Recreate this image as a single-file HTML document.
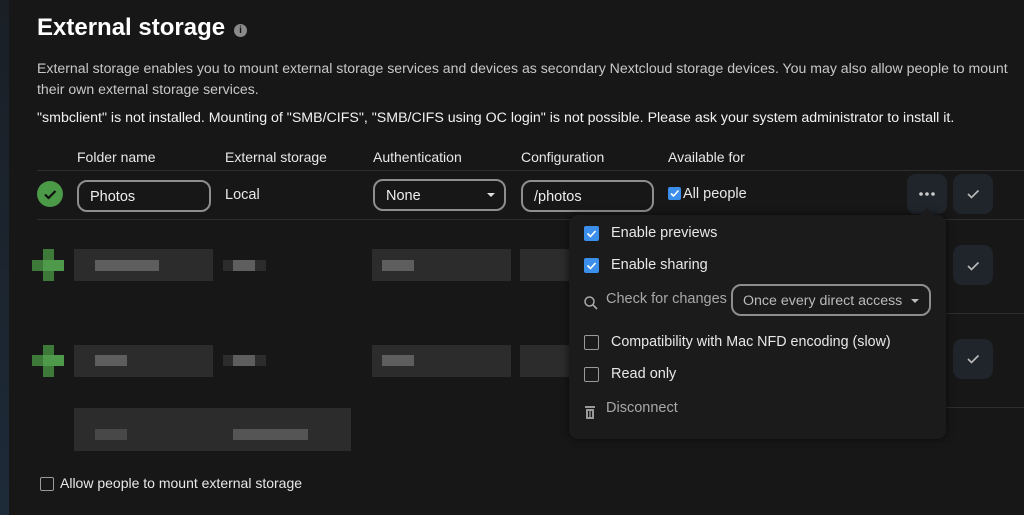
<!DOCTYPE html>
<html><head><meta charset="utf-8"><style>
*{box-sizing:border-box;margin:0;padding:0}
body{width:1024px;height:515px;overflow:hidden;background:#171717;font-family:"Liberation Sans",sans-serif;color:#e8e8e8;position:relative}
.a{position:absolute;white-space:nowrap}
.strip{left:0;top:0;width:9px;height:515px;background:linear-gradient(#1a1f26,#1d2a38)}
.inp{position:absolute;border:2px solid #8e8e8e;border-radius:10px;height:32px;font-size:14.5px;padding:7px 11px;color:#eee}
.line{position:absolute;height:1px;background:#2e2e2e}
.btn{position:absolute;width:40px;height:40px;border-radius:9px;background:#1f252b}
.blk{position:absolute;background:#2c2c2c}
.blk2{position:absolute;background:#5e5e5e}
.cb{position:absolute;width:15px;height:15px;border-radius:2px}
.on{background:#3b8eea}
.off{border:1.5px solid #9a9a9a}
.pop{position:absolute;left:569px;top:215px;width:377px;height:224px;background:#1b1b1b;border-radius:9px;box-shadow:0 0 8px rgba(0,0,0,.6)}
</style></head><body>
<div class="a strip"></div>
<div class="a" style="left:37px;top:14px;font-size:24px;font-weight:bold;color:#fff">External storage</div>
<div class="a" style="left:234px;top:24px;width:13px;height:13px;border-radius:50%;background:#8a8a8a;color:#171717;font-size:10px;font-weight:bold;text-align:center;line-height:13px">i</div>
<div class="a" style="left:37px;top:58px;font-size:14.1px;color:#c8c8c8;line-height:20.5px">External storage enables you to mount external storage services and devices as secondary Nextcloud storage devices. You may also allow people to mount<br>their own external storage services.</div>
<div class="a" style="left:37px;top:110px;font-size:14.2px;color:#f2f2f2">"smbclient" is not installed. Mounting of "SMB/CIFS", "SMB/CIFS using OC login" is not possible. Please ask your system administrator to install it.</div>
<div class="a" style="left:77px;top:149px;font-size:14px">Folder name</div>
<div class="a" style="left:225px;top:149px;font-size:14px">External storage</div>
<div class="a" style="left:373px;top:149px;font-size:14px">Authentication</div>
<div class="a" style="left:521px;top:149px;font-size:14px">Configuration</div>
<div class="a" style="left:668px;top:149px;font-size:14px">Available for</div>
<div class="line" style="left:37px;top:170px;width:987px"></div>
<div class="a" style="left:37px;top:181px;width:26px;height:26px;border-radius:50%;background:#4a9a48"></div>
<svg class="a" style="left:37px;top:181px" width="26" height="26"><path d="M8 13.5l3.5 3.5 7-7" stroke="#111" stroke-width="2.2" fill="none"/></svg>
<div class="inp" style="left:77px;top:180px;width:134px">Photos</div>
<div class="a" style="left:225px;top:187px;font-size:14.5px">Local</div>
<div class="inp" style="left:373px;top:179px;width:133px">None</div>
<div class="a" style="left:487px;top:193px;border-left:4px solid transparent;border-right:4px solid transparent;border-top:4px solid #ddd"></div>
<div class="inp" style="left:521px;top:180px;width:133px">/photos</div>
<div class="cb on" style="left:668px;top:187px;width:13px;height:13px"></div>
<svg class="a" style="left:668px;top:187px" width="13" height="13"><path d="M3 6.5l2.5 2.5 5-5.5" stroke="#fff" stroke-width="1.6" fill="none"/></svg>
<div class="a" style="left:683px;top:186px;font-size:14.5px">All people</div>
<div class="btn" style="left:907px;top:174px"></div>
<svg class="a" style="left:907px;top:174px" width="40" height="40"><circle cx="14" cy="20" r="1.8" fill="#ccc"/><circle cx="20" cy="20" r="1.8" fill="#ccc"/><circle cx="26" cy="20" r="1.8" fill="#ccc"/></svg>
<div class="btn" style="left:953px;top:174px"></div>
<svg class="a" style="left:965px;top:186px" width="16" height="16"><path d="M3 8l3.5 3.5 7-7" stroke="#bbb" stroke-width="1.6" fill="none"/></svg>
<div class="line" style="left:37px;top:219px;width:987px"></div>
<!-- blurred rows -->
<div class="a" style="left:43px;top:249px;width:11px;height:32px;background:#3d7a3a"></div>
<div class="a" style="left:32px;top:260px;width:32px;height:11px;background:#3d7a3a"></div>
<div class="a" style="left:43px;top:260px;width:21px;height:11px;background:#4f9a4a"></div>
<div class="blk" style="left:74px;top:249px;width:139px;height:32px"></div>
<div class="blk2" style="left:95px;top:260px;width:64px;height:11px"></div>
<div class="blk" style="left:223px;top:260px;width:43px;height:11px"></div>
<div class="blk2" style="left:233px;top:260px;width:22px;height:11px"></div>
<div class="blk" style="left:372px;top:249px;width:139px;height:32px"></div>
<div class="blk2" style="left:382px;top:260px;width:32px;height:11px"></div>
<div class="blk" style="left:520px;top:249px;width:50px;height:32px"></div>
<div class="btn" style="left:953px;top:245px"></div>
<svg class="a" style="left:965px;top:258px" width="16" height="16"><path d="M3 8l3.5 3.5 7-7" stroke="#bbb" stroke-width="1.6" fill="none"/></svg>
<div class="line" style="left:945px;top:313px;width:79px"></div>
<div class="a" style="left:43px;top:345px;width:11px;height:32px;background:#3d7a3a"></div>
<div class="a" style="left:32px;top:355px;width:32px;height:11px;background:#3d7a3a"></div>
<div class="a" style="left:43px;top:355px;width:21px;height:11px;background:#4f9a4a"></div>
<div class="blk" style="left:74px;top:345px;width:139px;height:32px"></div>
<div class="blk2" style="left:95px;top:355px;width:32px;height:11px"></div>
<div class="blk" style="left:223px;top:355px;width:43px;height:11px"></div>
<div class="blk2" style="left:233px;top:355px;width:22px;height:11px"></div>
<div class="blk" style="left:372px;top:345px;width:139px;height:32px"></div>
<div class="blk2" style="left:382px;top:355px;width:32px;height:11px"></div>
<div class="blk" style="left:520px;top:345px;width:50px;height:32px"></div>
<div class="btn" style="left:953px;top:339px"></div>
<svg class="a" style="left:965px;top:351px" width="16" height="16"><path d="M3 8l3.5 3.5 7-7" stroke="#bbb" stroke-width="1.6" fill="none"/></svg>
<div class="line" style="left:945px;top:407px;width:79px"></div>
<div class="blk" style="left:74px;top:408px;width:277px;height:43px"></div>
<div class="blk2" style="left:95px;top:429px;width:32px;height:11px;background:#484848"></div>
<div class="blk2" style="left:233px;top:429px;width:75px;height:11px;background:#555"></div>
<!-- bottom -->
<div class="cb off" style="left:40px;top:477px;width:14px;height:14px"></div>
<div class="a" style="left:60px;top:475px;font-size:14px">Allow people to mount external storage</div>
<!-- popup -->
<div class="pop"></div>
<div class="a" style="left:920px;top:208px;border-left:7px solid transparent;border-right:7px solid transparent;border-bottom:7px solid #1b1b1b"></div>
<div class="cb on" style="left:584px;top:226px"></div>
<svg class="a" style="left:584px;top:226px" width="15" height="15"><path d="M3.5 7.5l3 3 5-5.5" stroke="#fff" stroke-width="1.6" fill="none"/></svg>
<div class="a" style="left:611px;top:225px;font-size:14.5px">Enable previews</div>
<div class="cb on" style="left:584px;top:258px"></div>
<svg class="a" style="left:584px;top:258px" width="15" height="15"><path d="M3.5 7.5l3 3 5-5.5" stroke="#fff" stroke-width="1.6" fill="none"/></svg>
<div class="a" style="left:611px;top:257px;font-size:14.5px">Enable sharing</div>
<svg class="a" style="left:583px;top:295px" width="16" height="16"><circle cx="6.5" cy="6.5" r="4.5" stroke="#aaa" stroke-width="1.5" fill="none"/><path d="M10 10l4 4" stroke="#aaa" stroke-width="1.6"/></svg>
<div class="a" style="left:606px;top:291px;font-size:14.5px;color:#a8a8a8">Check for changes</div>
<div class="inp" style="left:731px;top:284px;width:200px;color:#bbb;padding-left:10px;font-size:14.2px">Once every direct access</div>
<div class="a" style="left:911px;top:299px;border-left:4px solid transparent;border-right:4px solid transparent;border-top:4px solid #bbb"></div>
<div class="cb off" style="left:584px;top:335px"></div>
<div class="a" style="left:611px;top:334px;font-size:14.3px">Compatibility with Mac NFD encoding (slow)</div>
<div class="cb off" style="left:584px;top:367px"></div>
<div class="a" style="left:611px;top:366px;font-size:14.5px">Read only</div>
<svg class="a" style="left:583px;top:404px" width="14" height="16"><rect x="2" y="2" width="10" height="2" fill="#999"/><rect x="3" y="5" width="8" height="10" fill="#999"/><rect x="5" y="7" width="1.3" height="6" fill="#1b1b1b"/><rect x="7.7" y="7" width="1.3" height="6" fill="#1b1b1b"/></svg>
<div class="a" style="left:606px;top:400px;font-size:14.5px;color:#a8a8a8">Disconnect</div>
</body></html>
